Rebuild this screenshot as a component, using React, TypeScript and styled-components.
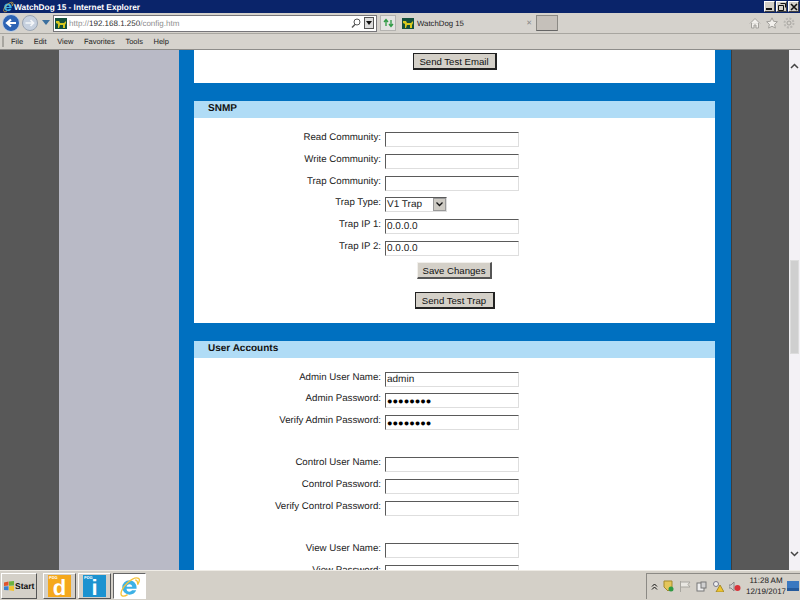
import * as React from 'react';
import styled, { createGlobalStyle } from 'styled-components';

const GlobalStyle = createGlobalStyle`
  html, body { margin: 0; padding: 0; height: 100%; overflow: hidden; }
  body { font-family: "Liberation Sans", Arial, sans-serif; text-rendering: geometricPrecision; }
  * { box-sizing: border-box; }
`;

const Screen = styled.div`
  width: 800px;
  height: 600px;
  display: flex;
  flex-direction: column;
  overflow: hidden;
  background: #d4d0c8;
`;

/* window chrome */
const TitleBar = styled.div`
  height: 13px;
  flex: none;
  background: #0a246a;
  display: flex;
  align-items: center;
  padding-left: 2px;
  gap: 0;
  color: #fff;
  font: bold 8.3px "Liberation Sans", sans-serif;
`;

const TitleText = styled.span`
  flex: 1;
  white-space: nowrap;
`;

const WinButtons = styled.div`
  display: flex;
  gap: 1px;
  padding-right: 1px;
`;

const WinButton = styled.div`
  width: 11px;
  height: 11px;
  background: #d4d0c8;
  border: 1px solid;
  border-color: #fff #404040 #404040 #fff;
  display: flex;
  align-items: center;
  justify-content: center;
`;

const NavBar = styled.div`
  height: 21px;
  flex: none;
  display: flex;
  align-items: center;
  background: #d5d2cc;
  padding-left: 2px;
  border-bottom: 1px solid #a8a6a0;
`;

const NavCircles = styled.div`
  display: flex;
  align-items: center;
  width: 51px;
  flex: none;
`;

const AddressBox = styled.div`
  width: 324px;
  height: 17px;
  flex: none;
  background: #fff;
  border: 1px solid #77767a;
  display: flex;
  align-items: center;
  padding-left: 1px;
  font: 8px "Liberation Sans", sans-serif;
  color: #8d8d8d;
`;

const Url = styled.span`
  flex: 1;
  margin-left: 2px;
  b {
    font-weight: normal;
    color: #333;
  }
`;

const DropBox = styled.div`
  width: 10px;
  height: 12px;
  margin: 0 2px 0 3px;
  background: #dcdcdc;
  border: 1px solid #555;
  display: flex;
  align-items: center;
  justify-content: center;
`;

const RefreshBox = styled.div`
  width: 16px;
  height: 16px;
  margin-left: 3px;
  flex: none;
  background: #e4e4e2;
  border: 1px solid #b4b3b0;
  display: flex;
  align-items: center;
  justify-content: center;
`;

const TabItem = styled.div`
  width: 137px;
  height: 20px;
  margin-left: 3px;
  padding: 0 2px 0 3px;
  flex: none;
  display: flex;
  align-items: center;
  gap: 3px;
  background: #d6d3ce;
  font: 7.8px "Liberation Sans", sans-serif;
  color: #222;
`;

const TabTitle = styled.span`
  flex: 1;
`;

const TabClose = styled.span`
  color: #888;
  font-size: 7px;
  margin-right: 2px;
`;

const NewTab = styled.div`
  width: 22px;
  height: 16px;
  flex: none;
  background: #c5c0ba;
  border: 1px solid #8b8984;
  border-bottom-color: #666;
`;

const RightIcons = styled.div`
  margin-left: auto;
  display: flex;
  gap: 5px;
  padding-right: 5px;
`;

const MenuBar = styled.div`
  height: 16px;
  flex: none;
  display: flex;
  align-items: center;
  padding-left: 2px;
  background: #d6d3cd;
  border-bottom: 1px solid #8e8d8a;
  font: 7.5px "Liberation Sans", sans-serif;
  color: #222;
`;

const MenuGrip = styled.div`
  width: 2px;
  height: 11px;
  background: #a8a6a0;
  margin-right: 7px;
`;

const MenuItem = styled.span`
  margin-right: 10.6px;
`;

/* browser content */
const Viewport = styled.div`
  height: 520px;
  flex: none;
  display: flex;
  overflow: hidden;
`;

const GrayGutter = styled.div<{ $edge?: boolean }>`
  flex: ${p => (p.$edge ? '1' : 'none')};
  width: 59px;
  background: #585858;
  border-left: ${p => (p.$edge ? '1px solid #3d3d3d' : 'none')};
`;

const SideColumn = styled.div`
  width: 120px;
  flex: none;
  background: #b9bac6;
`;

const ContentColumn = styled.div`
  width: 552px;
  flex: none;
  background: #0070c0;
  padding: 0 16px 0 15px;
  display: flex;
  flex-direction: column;
  gap: 18px;
`;

const Section = styled.section`
  background: #fff;
  flex: none;
`;

const SectionHead = styled.h2`
  margin: 0;
  height: 17px;
  padding-left: 14px;
  background: #b0dcf6;
  font: bold 10px/16px "Liberation Sans", sans-serif;
  color: #111;
`;

const FormBody = styled.div<{ $pad: string }>`
  padding: ${p => p.$pad};
  display: flex;
  flex-direction: column;
  align-items: stretch;
`;

const Row = styled.div<{ $gapAfter?: number }>`
  display: grid;
  grid-template-columns: 187px 134px;
  column-gap: 4px;
  height: 15px;
  margin-bottom: ${p => p.$gapAfter ?? 7}px;
`;

const Label = styled.label`
  text-align: right;
  font: 9.7px/12px "Liberation Sans", sans-serif;
  color: #222;
  white-space: nowrap;
`;

const Field = styled.div`
  height: 15px;
  background: #fff;
  border: 1px solid;
  border-color: #5a5a5a #dedede #dedede #5a5a5a;
  padding-left: 1px;
  font: 10px/14px "Liberation Sans", sans-serif;
  color: #222;
  white-space: nowrap;
  overflow: hidden;
`;

const Dots = styled.span`
  font-size: 9.2px;
  color: #000;
`;

const SelectBox = styled.div`
  width: 62px;
  height: 15px;
  background: #fff;
  border: 1px solid;
  border-color: #5a5a5a #dedede #dedede #5a5a5a;
  display: flex;
  align-items: center;
  padding-left: 1px;
  font: 10px "Liberation Sans", sans-serif;
  color: #222;
`;

const SelectArrow = styled.div`
  width: 13px;
  height: 13px;
  margin-left: auto;
  background: #cdcac3;
  border: 1px solid #999;
  display: flex;
  align-items: center;
  justify-content: center;
`;

const ButtonRow = styled.div<{ $top?: number }>`
  display: flex;
  justify-content: center;
  margin-top: ${p => p.$top ?? 0}px;
`;

const Button = styled.button<{ $w: number; $strong?: boolean }>`
  width: ${p => p.$w}px;
  height: 17px;
  padding: 0;
  background: #d4d0c8;
  border: 1px solid;
  border-color: ${p => (p.$strong ? '#222' : '#f2f0ec #555 #555 #f2f0ec')};
  border-width: 1px 2px 2px 1px;
  font: 9.6px/13px "Liberation Sans", sans-serif;
  color: #111;
`;

const ScrollBar = styled.div`
  width: 11px;
  flex: none;
  background: #f3f1f5;
  display: flex;
  flex-direction: column;
  align-items: center;
  padding: 13px 0 13px;
`;

const ScrollThumb = styled.div`
  width: 9px;
  height: 94px;
  margin-top: 191px;
  background: #cfcfcf;
  border: 1px solid #dcdcdc;
`;

const ArrowDown = styled.svg`
  margin-top: auto;
`;

/* taskbar */
const Taskbar = styled.div`
  height: 30px;
  flex: none;
  display: flex;
  align-items: center;
  background: #d4d0c8;
  padding-left: 1px;
  border-top: 1px solid #efece6;
`;

const StartButton = styled.div`
  width: 36px;
  height: 26px;
  display: flex;
  align-items: center;
  gap: 1px;
  padding-left: 2px;
  border: 1px solid;
  border-color: #fff #555 #555 #fff;
  font: bold 8.5px "Liberation Sans", sans-serif;
  color: #111;
`;

const TaskApps = styled.div`
  display: flex;
  gap: 2px;
  margin-left: 6px;
  height: 26px;
  align-items: center;
`;

const TaskApp = styled.div<{ $active?: boolean }>`
  width: 33px;
  height: 26px;
  padding: 1px 4px;
  border: 1px solid;
  border-color: ${p => (p.$active ? '#666 #fff #fff #666' : '#fff #555 #555 #fff')};
  background: ${p => (p.$active ? '#fff' : 'transparent')};
  display: flex;
  justify-content: center;
`;

const Tile = styled.div<{ $bg: string }>`
  width: 100%;
  height: 100%;
  background: ${p => p.$bg};
  position: relative;
  color: #fff;
  font: bold 22px/25px "Liberation Sans", sans-serif;
  text-align: center;
  &::before {
    content: 'PDG';
    position: absolute;
    left: 1px;
    top: 0;
    font: bold 4px/5px "Liberation Sans", sans-serif;
  }
`;

const Tray = styled.div`
  margin-left: auto;
  height: 26px;
  width: 154px;
  display: flex;
  align-items: center;
  gap: 5px;
  padding-left: 4px;
  border-left: 1px solid #8c8a85;
  border-top: 1px solid #8c8a85;
  font: 8px/11px "Liberation Sans", sans-serif;
  color: #222;
`;

const ClockBlock = styled.div`
  display: flex;
  align-items: center;
  gap: 1px;
`;

const Clock = styled.div`
  text-align: center;
  white-space: nowrap;
  line-height: 11px;
`;

const IeLogo = ({ size }: { size: number }) => (
  <svg width={size} height={size} viewBox="0 0 24 24">
    <path
      d="M12 5a7.500 7.500 0 0 0-7.600 7.400A7.600 7.600 0 0 0 12 20c3.300 0 6-1.800 7-4.600h-4.500c-.6 1-1.500 1.500-2.600 1.500-1.700 0-3-1.200-3-3.100h10.500c.4-5-2.900-8.800-7.400-8.800zM9 11.800c.2-1.500 1.400-2.700 3-2.700s2.700 1.100 2.900 2.700z"
      fill="#3cb1e6"
    />
    <path
      d="M4 21c-2.500-2 1-9 6-13.500C14.500 3.500 19 1.500 21.500 3c1.500 1 .8 3.500-1 6.500.3-2.500-.6-4.500-2.500-5M4 21c1.500 1 4 .3 6-1"
      fill="none"
      stroke="#f5c33b"
      strokeWidth="1.400"
    />
  </svg>
);

const DogIcon = () => (
  <svg width="12" height="11" viewBox="0 0 12 11">
    <rect width="12" height="11" fill="#14503c" />
    <path d="M1 3h3l1 2h4l2-2v2l-1 2v3H8V7H5L4 10H3V6L1 5z" fill="#d8c81e" />
  </svg>
);

const BackButton = () => (
  <svg width="18" height="18" viewBox="0 0 18 18">
    <circle cx="9" cy="9" r="8.500" fill="#2c63b4" stroke="#c4d2e4" />
    <path d="M14 9H6M9 5.500L5 9l4 3.500" fill="none" stroke="#fff" strokeWidth="2.200" />
  </svg>
);

const ForwardButton = () => (
  <svg width="16" height="16" viewBox="0 0 16 16" style={{ marginLeft: 2 }}>
    <circle cx="8" cy="8" r="7.500" fill="#c6d0de" stroke="#9aa4b2" />
    <path d="M3.500 8h8M8.500 5l3 3-3 3" fill="none" stroke="#f4f6f9" strokeWidth="1.700" />
  </svg>
);

const Fields = ({ rows }: { rows: [string, string, number?, boolean?][] }) => (
  <>
    {rows.map(([label, value, after, secret]) => (
      <Row key={label} $gapAfter={after}>
        <Label>{label}:</Label>
        <Field>{secret ? <Dots>●●●●●●●●</Dots> : value}</Field>
      </Row>
    ))}
  </>
);

export default function App() {
  return (
    <Screen>
      <GlobalStyle />
      <TitleBar>
        <IeLogo size={12} />
        <TitleText>WatchDog 15 - Internet Explorer</TitleText>
        <WinButtons>
          <WinButton>
            <svg width="7" height="7" viewBox="0 0 7 7"><rect y="5" width="6" height="2" fill="#111" /></svg>
          </WinButton>
          <WinButton>
            <svg width="8" height="8" viewBox="0 0 8 8"><path d="M2.500.5h5v4M.5 2.500h5v5h-5z" fill="none" stroke="#111" /></svg>
          </WinButton>
          <WinButton>
            <svg width="8" height="8" viewBox="0 0 8 8"><path d="M1 1l6 6M7 1L1 7" stroke="#111" strokeWidth="1.600" /></svg>
          </WinButton>
        </WinButtons>
      </TitleBar>

      <NavBar>
        <NavCircles>
          <BackButton />
          <ForwardButton />
          <svg width="8" height="6" viewBox="0 0 8 6" style={{ marginLeft: 4 }}><path d="M0 0h8L4 5z" fill="#3b6f9e" /></svg>
        </NavCircles>
        <AddressBox>
          <DogIcon />
          <Url>http://<b>192.168.1.250</b>/config.htm</Url>
          <svg width="10" height="10" viewBox="0 0 10 10">
            <circle cx="6" cy="4" r="3" fill="none" stroke="#555" />
            <path d="M4 6.500L1 9.500" stroke="#555" strokeWidth="1.400" />
          </svg>
          <DropBox>
            <svg width="6" height="4" viewBox="0 0 6 4"><path d="M0 0h6L3 4z" fill="#111" /></svg>
          </DropBox>
        </AddressBox>
        <RefreshBox>
          <svg width="11" height="10" viewBox="0 0 11 10">
            <path d="M3 8V2M1 4l2-2.500L5 4" fill="none" stroke="#2f9a44" strokeWidth="1.300" />
            <path d="M8 2v6M6 6l2 2.500L10 6" fill="none" stroke="#2f9a44" strokeWidth="1.300" />
          </svg>
        </RefreshBox>
        <TabItem>
          <DogIcon />
          <TabTitle>WatchDog 15</TabTitle>
          <TabClose>✕</TabClose>
        </TabItem>
        <NewTab />
        <RightIcons>
          <svg width="12" height="12" viewBox="0 0 12 12"><path d="M1 6.500L6 1.500l5 5M2.500 6v5h2.500V8h2v3h2.500V6" fill="#f2f0ec" stroke="#a3a19c" /></svg>
          <svg width="12" height="12" viewBox="0 0 12 12"><path d="M6 .8l1.600 3.500 3.800.4-2.800 2.600.8 3.800L6 9.200l-3.400 1.900.8-3.800L.6 4.700l3.800-.4z" fill="#f2f0ec" stroke="#a3a19c" /></svg>
          <svg width="12" height="12" viewBox="0 0 12 12"><circle cx="6" cy="6" r="2" fill="none" stroke="#a3a19c" /><circle cx="6" cy="6" r="4.500" fill="none" stroke="#b8b6b1" strokeWidth="2" strokeDasharray="2 1.500" /></svg>
        </RightIcons>
      </NavBar>

      <MenuBar>
        <MenuGrip />
        <MenuItem>File</MenuItem>
        <MenuItem>Edit</MenuItem>
        <MenuItem>View</MenuItem>
        <MenuItem>Favorites</MenuItem>
        <MenuItem>Tools</MenuItem>
        <MenuItem>Help</MenuItem>
      </MenuBar>

      <Viewport>
        <GrayGutter />
        <SideColumn />
        <ContentColumn>
          <Section>
            <FormBody $pad="3px 0 13px">
              <ButtonRow>
                <Button $w={84} $strong>Send Test Email</Button>
              </ButtonRow>
            </FormBody>
          </Section>
          <Section>
            <SectionHead>SNMP</SectionHead>
            <FormBody $pad="14px 0 14px">
              <Fields rows={[
                ['Read Community', ''],
                ['Write Community', ''],
                ['Trap Community', '', 6],
              ]} />
              <Row>
                <Label>Trap Type:</Label>
                <SelectBox>
                  V1 Trap
                  <SelectArrow>
                    <svg width="7" height="5" viewBox="0 0 7 5"><path d="M.5.5l3 3 3-3" fill="none" stroke="#111" strokeWidth="1.300" /></svg>
                  </SelectArrow>
                </SelectBox>
              </Row>
              <Fields rows={[
                ['Trap IP 1', '0.0.0.0'],
                ['Trap IP 2', '0.0.0.0', 6],
              ]} />
              <ButtonRow>
                <Button $w={75}>Save Changes</Button>
              </ButtonRow>
              <ButtonRow $top={13}>
                <Button $w={80} $strong>Send Test Trap</Button>
              </ButtonRow>
            </FormBody>
          </Section>
          <Section>
            <SectionHead>User Accounts</SectionHead>
            <FormBody $pad="14px 0 0">
              <Fields rows={[
                ['Admin User Name', 'admin', 6],
                ['Admin Password', '', 7, true],
                ['Verify Admin Password', '', 27, true],
                ['Control User Name', ''],
                ['Control Password', ''],
                ['Verify Control Password', '', 27],
                ['View User Name', ''],
                ['View Password', ''],
              ]} />
            </FormBody>
          </Section>
        </ContentColumn>
        <GrayGutter $edge />
        <ScrollBar>
          <svg width="9" height="6" viewBox="0 0 9 6"><path d="M1 5l3.500-3.500L8 5" fill="none" stroke="#444" strokeWidth="1.500" /></svg>
          <ScrollThumb />
          <ArrowDown width="9" height="6" viewBox="0 0 9 6"><path d="M1 1l3.500 3.500L8 1" fill="none" stroke="#444" strokeWidth="1.500" /></ArrowDown>
        </ScrollBar>
      </Viewport>

      <Taskbar>
        <StartButton>
          <svg width="10" height="10" viewBox="0 0 10 10">
            <path d="M0 1.500l4.500-1V4.500L0 5z" fill="#e0532b" />
            <path d="M5 .5l5-.5v4.500l-5 .2z" fill="#6db33f" />
            <path d="M0 5.500l4.500-.2v4L0 9z" fill="#3a7fd0" />
            <path d="M5 5.300l5-.2V10l-5-.7z" fill="#f3c32e" />
          </svg>
          Start
        </StartButton>
        <TaskApps>
          <TaskApp><Tile $bg="#f5a81c">d</Tile></TaskApp>
          <TaskApp><Tile $bg="#1c93d0">i</Tile></TaskApp>
          <TaskApp $active><IeLogo size={24} /></TaskApp>
        </TaskApps>
        <Tray>
          <svg width="7" height="7" viewBox="0 0 7 7"><path d="M1 3.500l2.500-2.500L6 3.500M1 6.500L3.500 4 6 6.500" fill="none" stroke="#111" /></svg>
          <svg width="11" height="12" viewBox="0 0 11 12"><path d="M1 1h8v6l-4 4-4-4z" fill="#e4c65a" stroke="#a48a2c" /><circle cx="8" cy="9" r="2.500" fill="#2f9a44" /></svg>
          <svg width="12" height="11" viewBox="0 0 12 11"><path d="M1.500 0v11M2 1h9L9 3.500 11 6H2" fill="#e9e7e2" stroke="#a8a6a0" /></svg>
          <svg width="11" height="11" viewBox="0 0 11 11"><rect x="1" y="2" width="7" height="8" fill="#eee" stroke="#777" /><rect x="5" y="1" width="5" height="6" fill="#d0d0d0" stroke="#777" /></svg>
          <svg width="12" height="11" viewBox="0 0 12 11"><circle cx="4" cy="3" r="2.500" fill="#eee" stroke="#778" /><path d="M8 4l4 7H4z" fill="#f0c52c" stroke="#a48a2c" /></svg>
          <svg width="12" height="11" viewBox="0 0 12 11"><path d="M0 4h2l3-3v9L2 7H0z" fill="#cfcfcf" stroke="#888" /><circle cx="8.500" cy="7" r="3" fill="#d8333a" /></svg>
          <ClockBlock>
            <Clock>11:28 AM<br />12/19/2017</Clock>
            <svg width="12" height="10" viewBox="0 0 12 10"><rect width="12" height="10" fill="#3a78c0" /><rect y="7" width="12" height="3" fill="#245a9c" /></svg>
          </ClockBlock>
        </Tray>
      </Taskbar>
    </Screen>
  );
}
